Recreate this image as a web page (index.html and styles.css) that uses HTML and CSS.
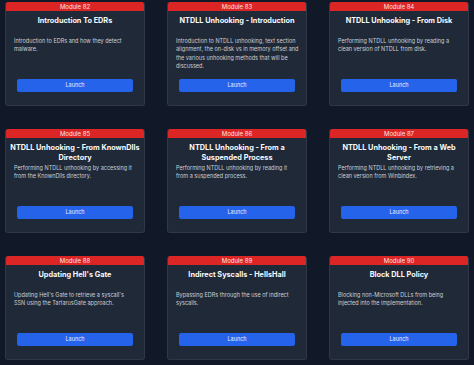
FILE: index.html
```html
<!DOCTYPE html>
<html lang="en">
<head>
<meta charset="utf-8">
<title>Modules</title>
<link rel="stylesheet" href="styles.css">
</head>
<body>
<div class="grid">
  <div class="card">
    <div class="card-head">Module 82</div>
    <h3 class="card-title">Introduction To EDRs</h3>
    <p class="card-desc">Introduction to EDRs and how they detect malware.</p>
    <button class="launch">Launch</button>
  </div>
  <div class="card">
    <div class="card-head">Module 83</div>
    <h3 class="card-title">NTDLL Unhooking - Introduction</h3>
    <p class="card-desc">Introduction to NTDLL unhooking, text section alignment, the on-disk vs in memory offset and the various unhooking methods that will be discussed.</p>
    <button class="launch">Launch</button>
  </div>
  <div class="card">
    <div class="card-head">Module 84</div>
    <h3 class="card-title">NTDLL Unhooking - From Disk</h3>
    <p class="card-desc">Performing NTDLL unhooking by reading a clean version of NTDLL from disk.</p>
    <button class="launch">Launch</button>
  </div>
  <div class="card">
    <div class="card-head">Module 85</div>
    <h3 class="card-title">NTDLL Unhooking - From KnownDlls Directory</h3>
    <p class="card-desc">Performing NTDLL unhooking by accessing it from the KnownDlls directory.</p>
    <button class="launch">Launch</button>
  </div>
  <div class="card">
    <div class="card-head">Module 86</div>
    <h3 class="card-title">NTDLL Unhooking - From a Suspended Process</h3>
    <p class="card-desc">Performing NTDLL unhooking by reading it from a suspended process.</p>
    <button class="launch">Launch</button>
  </div>
  <div class="card">
    <div class="card-head">Module 87</div>
    <h3 class="card-title">NTDLL Unhooking - From a Web Server</h3>
    <p class="card-desc">Performing NTDLL unhooking by retrieving a clean version from Winbindex.</p>
    <button class="launch">Launch</button>
  </div>
  <div class="card">
    <div class="card-head">Module 88</div>
    <h3 class="card-title">Updating Hell's Gate</h3>
    <p class="card-desc">Updating Hell's Gate to retrieve a syscall's SSN using the TartarusGate approach.</p>
    <button class="launch">Launch</button>
  </div>
  <div class="card">
    <div class="card-head">Module 89</div>
    <h3 class="card-title">Indirect Syscalls - HellsHall</h3>
    <p class="card-desc">Bypassing EDRs through the use of indirect syscalls.</p>
    <button class="launch">Launch</button>
  </div>
  <div class="card">
    <div class="card-head">Module 90</div>
    <h3 class="card-title">Block DLL Policy</h3>
    <p class="card-desc">Blocking non-Microsoft DLLs from being injected into the implementation.</p>
    <button class="launch">Launch</button>
  </div>
</div>
</body>
</html>
```

FILE: styles.css
```css
html, body {
  margin: 0;
  padding: 0;
  background: #111827;
  font-family: Inter, "Liberation Sans", Arial, sans-serif;
}

.grid {
  display: grid;
  grid-template-columns: repeat(3, 140px);
  column-gap: 22px;
  row-gap: 23px;
  padding: 2px 5px 0 5px;
}

.card {
  box-sizing: border-box;
  height: 104px;
  display: flex;
  flex-direction: column;
  background: #1f2937;
  border: 1px solid #2f3846;
  border-top: none;
  border-radius: 3px;
  overflow: hidden;
}

.card-head {
  height: 9px;
  line-height: 9px;
  background: #dc2626;
  color: #fde2e2;
  font-size: 6px;
  text-align: center;
  margin: 0 -1px;
}

.card-title {
  margin: 5px 4px 0 4px;
  height: 21px;
  font-size: 7.3px;
  line-height: 10px;
  font-weight: 700;
  color: #f9fafb;
  text-align: center;
}

.card-desc {
  margin: 0 7.5px 0 8px;
  font-size: 5.5px;
  line-height: 8.4px;
  color: #cbd0d8;
}

.launch {
  margin: auto 11px 13px 11px;
  height: 13.5px;
  padding: 0;
  border: none;
  border-radius: 2px;
  background: #2563eb;
  color: #e8efff;
  font-family: inherit;
  font-size: 5.5px;
  line-height: 13.5px;
}
```
